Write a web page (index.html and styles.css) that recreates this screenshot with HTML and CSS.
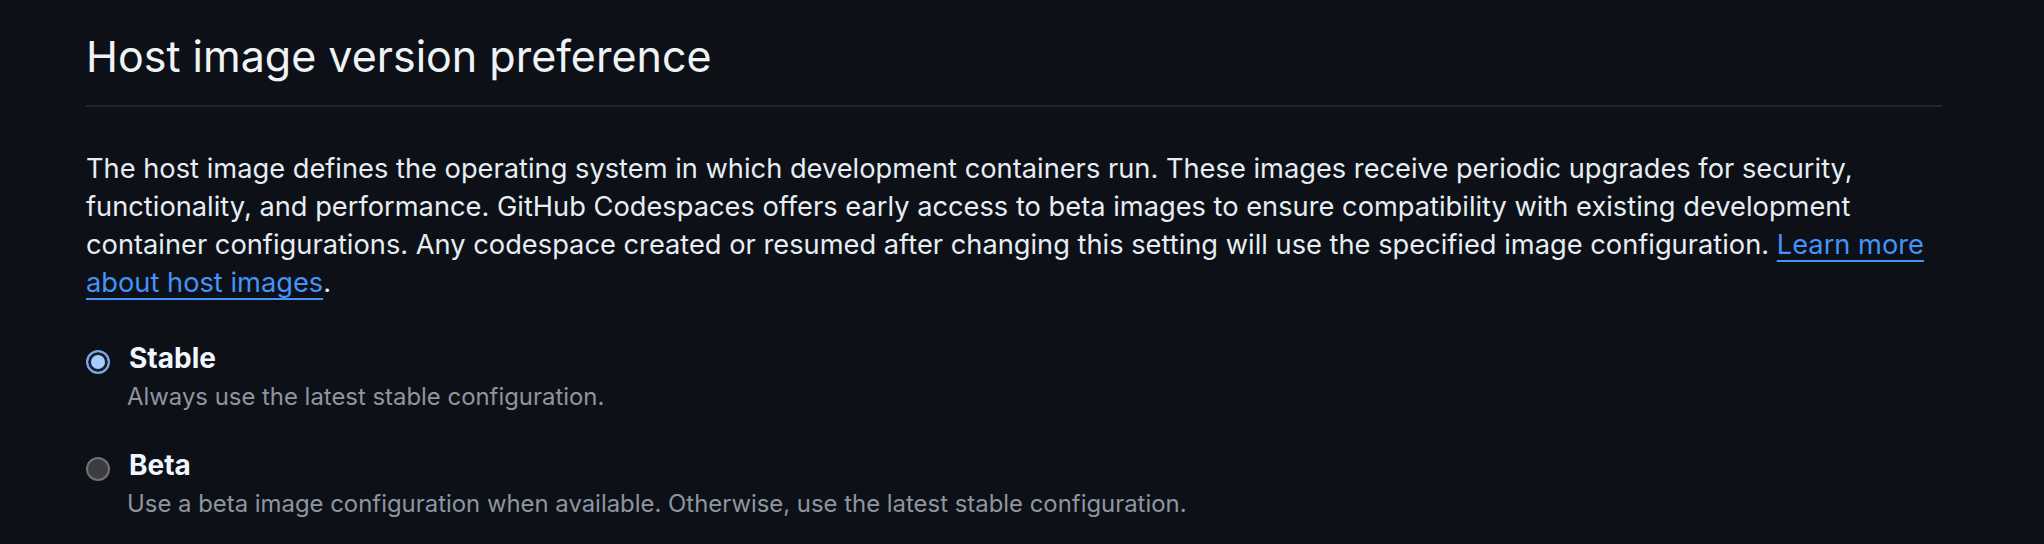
FILE: index.html
```html
<!DOCTYPE html>
<html lang="en">

<head>
    <meta charset="UTF-8">
    <meta name="viewport" content="width=device-width, initial-scale=1.0">
    <title>Codespaces settings</title>
    <link rel="stylesheet" href="styles.css">
</head>

<body>
    <div class="settings">
        <div class="subhead">
            <h2 class="subhead-heading">Host image version preference</h2>
        </div>
        <p class="note-text">
            The host image defines the operating system in which development containers run. These images receive
            periodic upgrades for security, functionality, and performance. GitHub Codespaces offers early access to
            beta images to ensure compatibility with existing development container configurations. Any codespace
            created or resumed after changing this setting will use the specified image configuration.
            <a href="#">Learn more about host images</a>.
        </p>
        <div class="form-checkbox">
            <label>
                <input type="radio" name="host-image" value="stable" checked>
                <span>Stable</span>
            </label>
            <p class="note">Always use the latest stable configuration.</p>
        </div>
        <div class="form-checkbox">
            <label>
                <input type="radio" name="host-image" value="beta">
                <span>Beta</span>
            </label>
            <p class="note">Use a beta image configuration when available. Otherwise, use the latest stable configuration.</p>
        </div>
    </div>
</body>
</html>
```

FILE: styles.css
```css
body {
    margin: 0;
    background-color: #0d1117;
    color: #e6edf3;
    font-family: Inter, "Noto Sans", sans-serif;
}

.settings {
    width: 1856px;
    margin-left: 86px;
    padding-top: 29px;
}

.subhead {
    border-bottom: 2px solid #21262d;
    padding-bottom: 21px;
}

.subhead-heading {
    margin: 0;
    font-size: 43px;
    font-weight: 400;
    line-height: 55px;
    color: #f0f3f6;
}

.note-text {
    margin: 43px 0 37px;
    font-size: 27.25px;
    line-height: 38px;
}

.note-text a {
    color: #4493f8;
    text-decoration: underline;
    text-decoration-thickness: 2px;
    text-underline-offset: 6px;
}

.form-checkbox {
    margin-bottom: 33px;
}

.form-checkbox label {
    display: flex;
    align-items: center;
    gap: 19px;
    font-size: 28px;
    font-weight: 700;
    line-height: 38px;
    color: #f0f6fc;
}

.form-checkbox input[type="radio"] {
    appearance: none;
    margin: 8px 0 0;
    width: 24px;
    height: 24px;
    border-radius: 50%;
    border: 2px solid #6e7278;
    background-color: #3d3d3f;
    box-sizing: border-box;
}

.form-checkbox input[type="radio"]:checked {
    border-color: #79a6eb;
    background-color: #a8cbff;
    box-shadow: inset 0 0 0 3px #1a1f27;
}

.form-checkbox .note {
    margin: 4px 0 0 41px;
    font-size: 23.9px;
    line-height: 32px;
    color: #8d96a0;
}
```
